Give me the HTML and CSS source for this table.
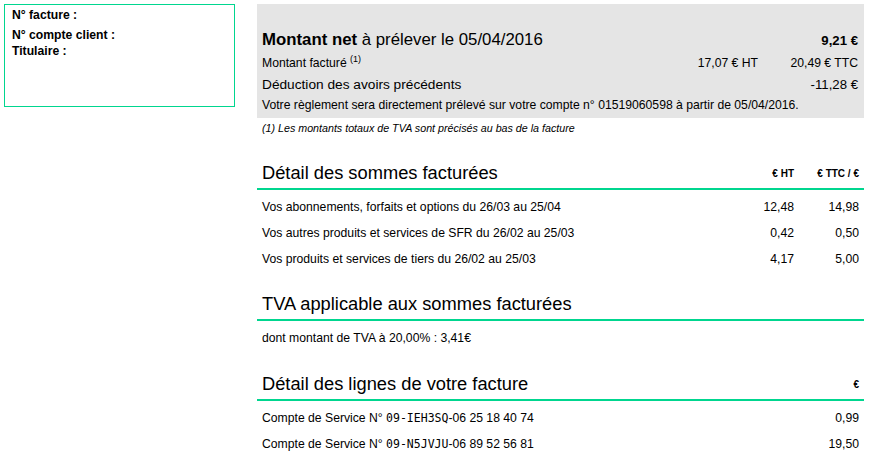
FILE: index.html
```html
<!DOCTYPE html>
<html lang="fr">
<head>
<meta charset="utf-8">
<title>Facture</title>
<link rel="stylesheet" href="styles.css">
</head>
<body>
<div class="page">
  <div class="idbox">
    <div class="id-line">N° facture :</div>
    <div class="id-line id-gap">N° compte client :</div>
    <div class="id-line">Titulaire :</div>
  </div>
  <div class="main">
    <div class="summary">
      <div class="sum-row sum-net">
        <span><b>Montant net</b> à prélever le 05/04/2016</span>
        <b class="sum-total">9,21 €</b>
      </div>
      <div class="sum-row sum-fact">
        <span>Montant facturé <sup>(1)</sup></span>
        <span class="sum-amounts"><span class="sum-ht">17,07 € HT</span><span class="sum-ttc">20,49 € TTC</span></span>
      </div>
      <div class="sum-row sum-ded">
        <span>Déduction des avoirs précédents</span>
        <span class="sum-val">-11,28 €</span>
      </div>
      <div class="sum-row sum-note">
        <span>Votre règlement sera directement prélevé sur votre compte n° 01519060598 à partir de 05/04/2016.</span>
      </div>
    </div>
    <div class="footnote">(1) Les montants totaux de TVA sont précisés au bas de la facture</div>

    <section class="section">
      <div class="sec-head">
        <h2>Détail des sommes facturées</h2>
        <span class="col-h col-ht">€ HT</span>
        <span class="col-h col-ttc">€ TTC / €</span>
      </div>
      <div class="row"><span class="lbl">Vos abonnements, forfaits et options du 26/03 au 25/04</span><span class="col-ht">12,48</span><span class="col-ttc">14,98</span></div>
      <div class="row"><span class="lbl">Vos autres produits et services de SFR du 26/02 au 25/03</span><span class="col-ht">0,42</span><span class="col-ttc">0,50</span></div>
      <div class="row"><span class="lbl">Vos produits et services de tiers du 26/02 au 25/03</span><span class="col-ht">4,17</span><span class="col-ttc">5,00</span></div>
    </section>

    <section class="section sec-tva">
      <div class="sec-head">
        <h2>TVA applicable aux sommes facturées</h2>
      </div>
      <div class="row"><span class="lbl">dont montant de TVA à 20,00% : 3,41€</span></div>
    </section>

    <section class="section sec-lines">
      <div class="sec-head">
        <h2>Détail des lignes de votre facture</h2>
        <span class="col-h col-ttc">€</span>
      </div>
      <div class="row"><span class="lbl">Compte de Service N° <span class="mono">09-IEH3SQ</span>-06 25 18 40 74</span><span class="col-ttc">0,99</span></div>
      <div class="row"><span class="lbl">Compte de Service N° <span class="mono">09-N5JVJU</span>-06 89 52 56 81</span><span class="col-ttc">19,50</span></div>
    </section>
  </div>
</div>
</body>
</html>
```

FILE: styles.css
```css
* { box-sizing: border-box; }
html, body { margin: 0; padding: 0; background: #fff; }
body {
  font-family: "Liberation Sans", Arial, sans-serif;
  color: #000;
  font-size: 12.2px;
}
.page {
  display: flex;
  align-items: flex-start;
  padding: 4px 0 0 4px;
}
.idbox {
  width: 231px;
  height: 103px;
  border: 1px solid #00d68f;
  padding: 2px 7px;
  flex: none;
}
.id-line {
  font-weight: bold;
  font-size: 12.2px;
  line-height: 16px;
}
.id-gap { margin-top: 4px; }

.main {
  margin-left: 22px;
  width: 607px;
  flex: none;
}
.summary {
  background: #e5e5e5;
  padding: 25px 6px 5px 5px;
  height: 114px;
}
.sum-row {
  display: flex;
  justify-content: space-between;
  align-items: baseline;
}
.sum-net { font-size: 16.8px; line-height: 22px; }
.sum-total { font-size: 13.2px; }
.sum-fact { font-size: 12.2px; line-height: 22px; }
.sum-fact sup { font-size: 9px; line-height: 0; vertical-align: 5px; }
.sum-amounts { display: flex; }
.sum-ht { width: 102px; text-align: right; }
.sum-ttc { width: 100px; text-align: right; }
.sum-ded { font-size: 13.7px; line-height: 22px; }
.sum-val { font-size: 13.2px; }
.sum-note { font-size: 12.2px; line-height: 18px; }

.footnote {
  font-size: 10.7px;
  font-style: italic;
  line-height: 14px;
  padding-left: 5px;
  margin-top: 3px;
}

.section { margin-top: 26px; }
.sec-tva { margin-top: 20px; }
.sec-lines { margin-top: 21px; }
.sec-head {
  display: flex;
  align-items: center;
  border-bottom: 2px solid #00d68f;
  padding: 0 5px 3px 5px;
  height: 29px;
}
.sec-head h2 {
  margin: 0;
  font-weight: normal;
  font-size: 18.3px;
  line-height: 24px;
  flex: 1;
}
.col-h { font-weight: bold; font-size: 10px; }
.row {
  display: flex;
  align-items: center;
  height: 26px;
  padding: 0 5px;
  font-size: 12.2px;
}
.sec-head + .row { margin-top: 4px; }
.lbl { flex: 1; }
.col-ht { width: 60px; text-align: right; }
.col-ttc { width: 65px; text-align: right; }
.mono {
  font-family: "DejaVu Sans Mono", "Liberation Mono", monospace;
  font-size: 11.5px;
}
```
